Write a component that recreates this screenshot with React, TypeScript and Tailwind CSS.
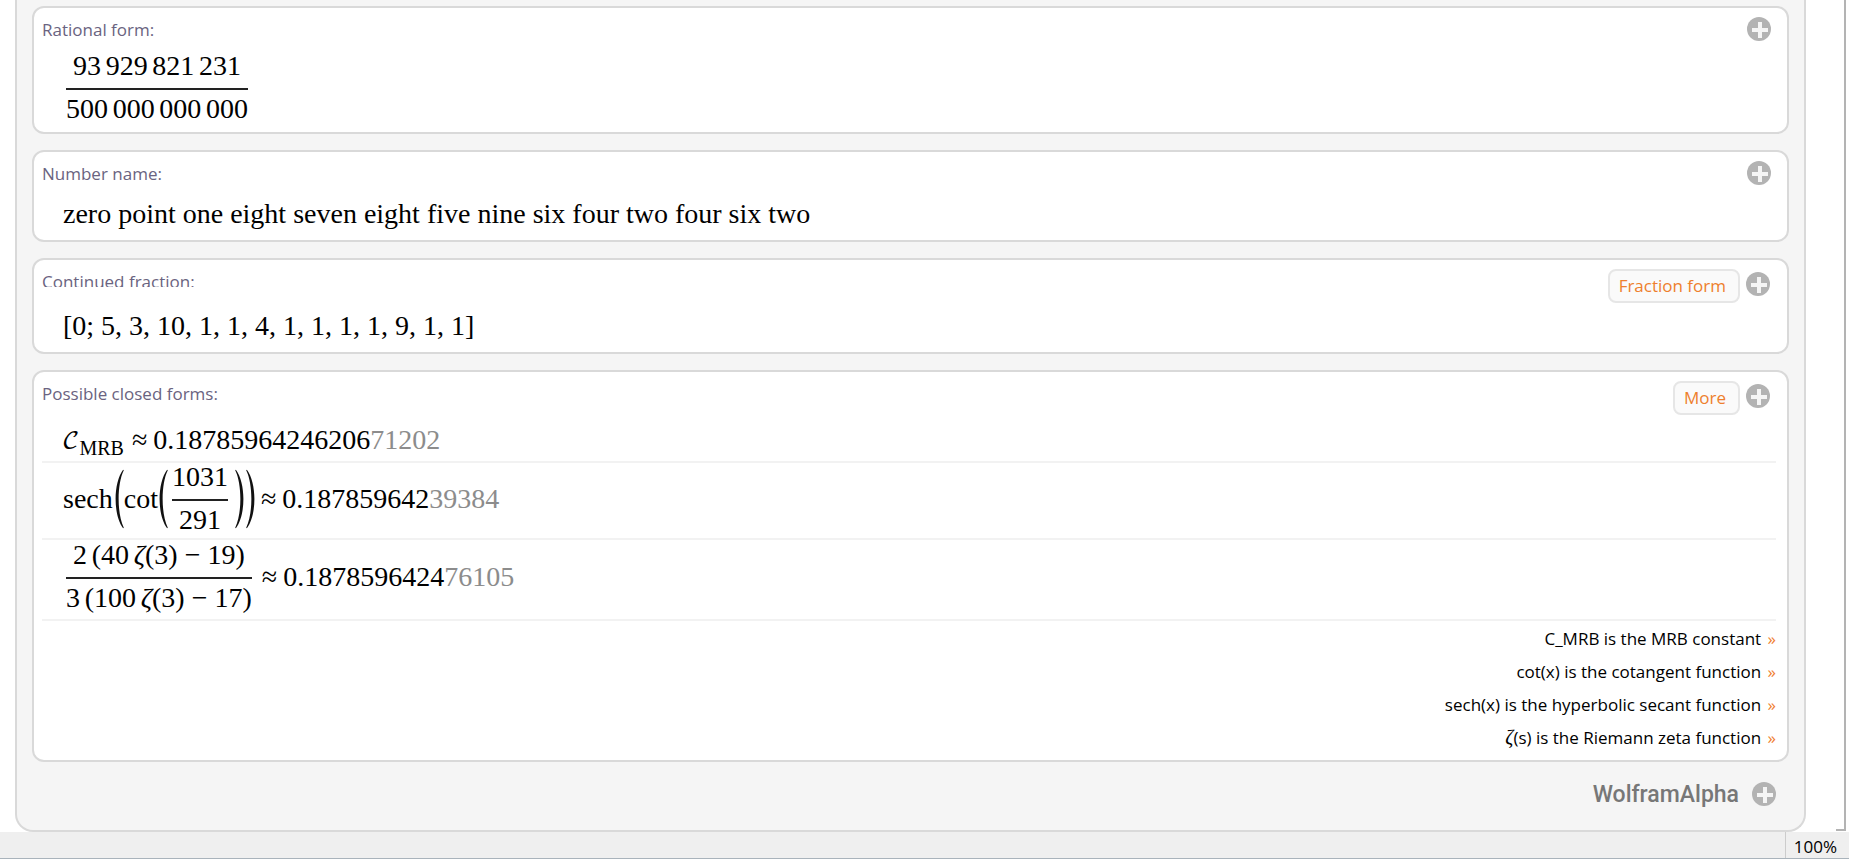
import type { ReactNode } from "react";

const SANS = "font-['Open_Sans','Noto_Sans',sans-serif]";
const MATH = "font-['Liberation_Serif','Times_New_Roman',serif] text-[28px] leading-[30px] text-black";

function PlusButton({ label }: { label: string }) {
  return (
    <button type="button" aria-label={label} className="block size-6 shrink-0">
      <svg viewBox="0 0 24 24" className="size-6" aria-hidden="true">
        <circle cx="12" cy="12" r="12" fill="#b3b3b3" />
        <path d="M11 5h4v6h6v4h-6v6h-4v-6H5v-4h6z" fill="#f5f5f5" />
      </svg>
    </button>
  );
}

function PillButton({ children }: { children: ReactNode }) {
  return (
    <button
      type="button"
      className="h-[34px] rounded-[8px] border-2 border-[#e6e6e6] bg-[#fafafa] px-3 pl-[9px] text-[17px] leading-[28px] text-[#ee7f2d]"
    >
      {children}
    </button>
  );
}

function Pod({
  title,
  action,
  clipped = false,
  children,
}: {
  title: string;
  action?: string;
  clipped?: boolean;
  children: ReactNode;
}) {
  return (
    <section className="rounded-[12px] border-2 border-[#d9d9d9] bg-white pr-[11px] pl-2">
      <header className="flex h-9 items-start justify-between">
        <h2
          className={
            clipped
              ? "mt-[9px] h-[18px] overflow-hidden text-[17px] leading-[26px] text-[#6a6380]"
              : "mt-[9px] text-[17px] leading-[26px] text-[#6a6380]"
          }
        >
          {title}
        </h2>
        <div className={action ? "mt-[9px] flex gap-1.5 pr-1.5" : "mt-[9px] flex pr-[5px]"}>
          {action && <PillButton>{action}</PillButton>}
          <div className={action ? "pt-[3px]" : ""}>
            <PlusButton label={`${title} options`} />
          </div>
        </div>
      </header>
      {children}
    </section>
  );
}

function Fraction({ top, bottom }: { top: ReactNode; bottom: ReactNode }) {
  return (
    <span className="inline-flex flex-col items-center whitespace-nowrap">
      <span className="pb-[7px]">{top}</span>
      <span className="h-0.5 self-stretch bg-[#222222]" />
      <span className="pt-1">{bottom}</span>
    </span>
  );
}

function Paren({ side }: { side: "left" | "right" }) {
  return (
    <svg viewBox="0 0 9 60" className="h-[60px] w-[9px] shrink-0" aria-hidden="true">
      <path
        d={
          side === "left"
            ? "M8.800 1.300C1.900 15 1.900 45 8.800 58.700L8.100 59.300C-1.900 46-1.900 14 8.100 .7z"
            : "M.2 1.300C7.100 15 7.100 45 .2 58.700L.9 59.300C10.900 46 10.900 14 .9 .7z"
        }
        fill="#111111"
      />
    </svg>
  );
}

function Approx({ digits, rest }: { digits: string; rest: string }) {
  return (
    <span className="flex items-baseline whitespace-nowrap">
      <span className="mr-1.5">≈</span>
      <span>
        {digits}
        <span className="text-[#8c8c8c]">{rest}</span>
      </span>
    </span>
  );
}

function Note({ children }: { children: ReactNode }) {
  return (
    <li>
      {children}{" "}
      <a href="#definition" aria-label="Definition" className="ml-0.5 text-[#f08030]">
        »
      </a>
    </li>
  );
}

export default function App() {
  return (
    <div className={`flex min-h-screen flex-col bg-white ${SANS}`}>
      <div className="flex grow">
        <main className="ml-[15px] flex grow flex-col gap-4 rounded-b-[18px] border-2 border-t-0 border-[#d9d9d9] bg-[#f5f5f5] px-[15px] pt-1.5">
          <Pod title="Rational form:">
            <div className={`flex pt-[7px] pb-2 pl-6 ${MATH}`}>
              <Fraction
                top={"93\u2006929\u2006821\u2006231"}
                bottom={"500\u2006000\u2006000\u2006000"}
              />
            </div>
          </Pod>
          <Pod title="Number name:">
            <p className={`pt-[11px] pb-[11px] pl-[21px] ${MATH}`}>
              zero point one eight seven eight five nine six four two four six two
            </p>
          </Pod>
          <Pod title="Continued fraction:" action="Fraction form" clipped>
            <p className={`pt-[15px] pb-[11px] pl-[21px] ${MATH}`}>
              [0; 5, 3, 10, 1, 1, 4, 1, 1, 1, 1, 9, 1, 1]
            </p>
          </Pod>
          <Pod title="Possible closed forms:" action="More">
            <div className={MATH}>
              <div className="flex h-[55px] items-baseline border-b-2 border-[#f2f2f2] pt-[17px] pl-5">
                <span className="mr-2 flex items-baseline whitespace-nowrap">
                  <span className="font-['DejaVu_Math_TeX_Gyre','Liberation_Serif',serif] text-[24px] leading-none">𝒞</span>
                  <sub className="top-1.5 bottom-auto text-[20px] leading-none">MRB</sub>
                </span>
                <Approx digits="0.18785964246206" rest="71202" />
              </div>
              <div className="flex h-[77px] items-center border-b-2 border-[#f2f2f2] pb-1 pl-[21px]">
                <span className="mr-0.5">sech</span>
                <Paren side="left" />
                <span className="mr-px">cot</span>
                <Paren side="left" />
                <span className="mr-[7px] ml-1 flex">
                  <Fraction top="1031" bottom="291" />
                </span>
                <Paren side="right" />
                <span className="ml-0.5 flex">
                  <Paren side="right" />
                </span>
                <span className="ml-1.5">
                  <Approx digits="0.187859642" rest="39384" />
                </span>
              </div>
              <div className="flex h-[81px] items-center gap-2.5 border-b-2 border-[#f2f2f2] pb-1.5 pl-6">
                <Fraction
                  top={<>2{"\u2006"}(40{"\u2006"}<i>ζ</i>(3) − 19)</>}
                  bottom={<>3{"\u2006"}(100{"\u2006"}<i>ζ</i>(3) − 17)</>}
                />
                <Approx digits="0.1878596424" rest="76105" />
              </div>
            </div>
            <ul className="pt-px pb-1.5 text-right text-[17px] leading-[33px] text-black">
              <Note>C_MRB is the MRB constant</Note>
              <Note>cot(x) is the cotangent function</Note>
              <Note>sech(x) is the hyperbolic secant function</Note>
              <Note>
                <i className="font-['Liberation_Serif',serif] text-[20px] leading-none">ζ</i>(s) is the Riemann zeta function
              </Note>
            </ul>
          </Pod>
          <footer className="flex h-[52px] items-start justify-end gap-[13px] pt-1 pr-[13px]">
            <a href="#wolframalpha" className="font-['Roboto',sans-serif] text-[23px] leading-[26px] font-medium text-[#777777]">
              WolframAlpha
            </a>
            <PlusButton label="WolframAlpha options" />
          </footer>
        </main>
        <div className="mr-[3px] ml-[30px] flex w-2.5 shrink-0 flex-col">
          <div className="w-0.5 grow self-end bg-[#b3b3b3]" />
          <div className="mb-px h-0.5 bg-[#b3b3b3]" />
        </div>
      </div>
      <div className="flex h-[27px] shrink-0 justify-end border-b border-[#a9b3bb] bg-[#efefef]">
        <output className="border-l border-[#cccccc] pr-3 pl-2 text-[17px] leading-[30px] text-black">
          100%
        </output>
      </div>
    </div>
  );
}
